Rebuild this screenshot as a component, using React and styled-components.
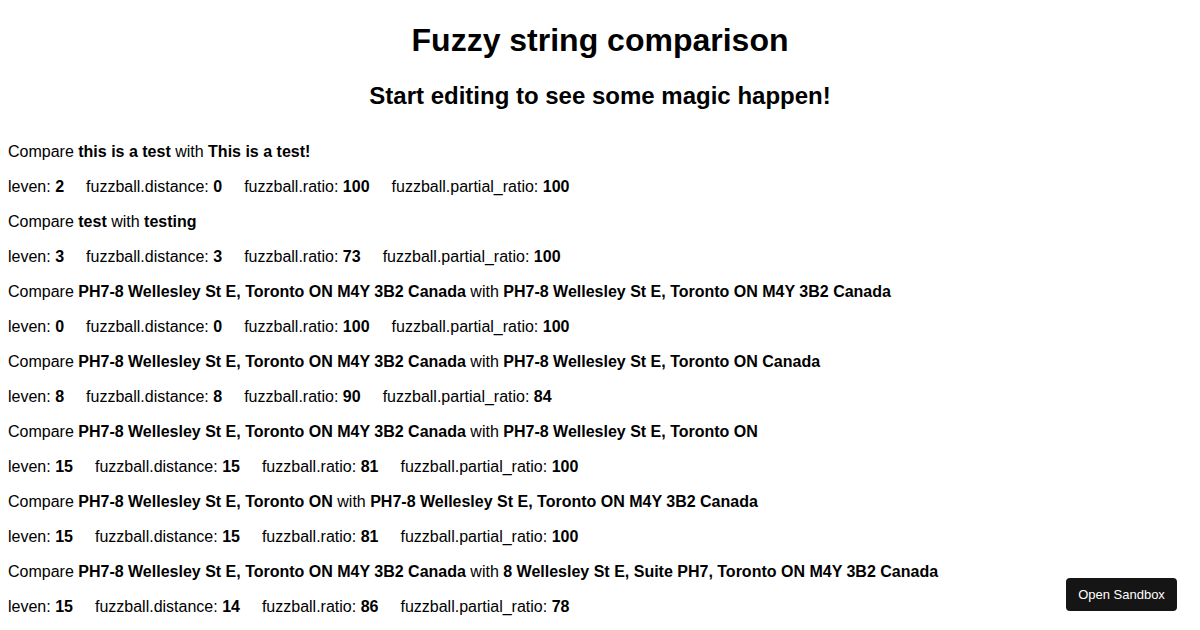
import React from "react";
import styled, { createGlobalStyle } from "styled-components";

const GlobalStyle = createGlobalStyle`
body {
    margin: 8px;
    font-family: "Liberation Sans", Arial, sans-serif;
    color: #000;
    background: #fff;
}
`;

const Title = styled.h1`
font-size: 32px;
text-align: center;
margin: 14px 0 23px;
`;

const SubTitle = styled.h2`
font-size: 24px;
text-align: center;
margin: 0 0 32px;
`;

const Line = styled.p`
font-size: 16px;
line-height: 19px;
margin: 16px 0;
`;

const Stats = styled(Line)`
display: flex;
gap: 22px;
`;

const SandboxBtn = styled.button`
position: fixed;
right: 23px;
bottom: 19px;
width: 111px;
height: 33px;
border: none;
border-radius: 4px;
background: #151515;
color: #fff;
font-family: "Liberation Sans", Arial, sans-serif;
font-size: 13px;
cursor: pointer;
`;

const A = "PH7-8 Wellesley St E, Toronto ON M4Y 3B2 Canada";

const rows = [
    { a: "this is a test", b: "This is a test!", r: [2, 0, 100, 100] },
    { a: "test", b: "testing", r: [3, 3, 73, 100] },
    { a: A, b: A, r: [0, 0, 100, 100] },
    { a: A, b: "PH7-8 Wellesley St E, Toronto ON Canada", r: [8, 8, 90, 84] },
    { a: A, b: "PH7-8 Wellesley St E, Toronto ON", r: [15, 15, 81, 100] },
    { a: "PH7-8 Wellesley St E, Toronto ON", b: A, r: [15, 15, 81, 100] },
    { a: A, b: "8 Wellesley St E, Suite PH7, Toronto ON M4Y 3B2 Canada", r: [15, 14, 86, 78] },
];

const labels = ["leven", "fuzzball.distance", "fuzzball.ratio", "fuzzball.partial_ratio"];

export default function App() {
    return (
        <>
            <GlobalStyle />
            <Title>Fuzzy string comparison</Title>
            <SubTitle>Start editing to see some magic happen!</SubTitle>
            {rows.map((row, i) => (
                <React.Fragment key={i}>
                    <Line>
                        Compare <b>{row.a}</b> with <b>{row.b}</b>
                    </Line>
                    <Stats>
                        {labels.map((l, j) => (
                            <span key={l}>
                                {l}: <b>{row.r[j]}</b>
                            </span>
                        ))}
                    </Stats>
                </React.Fragment>
            ))}
            <SandboxBtn>Open Sandbox</SandboxBtn>
        </>
    );
}
